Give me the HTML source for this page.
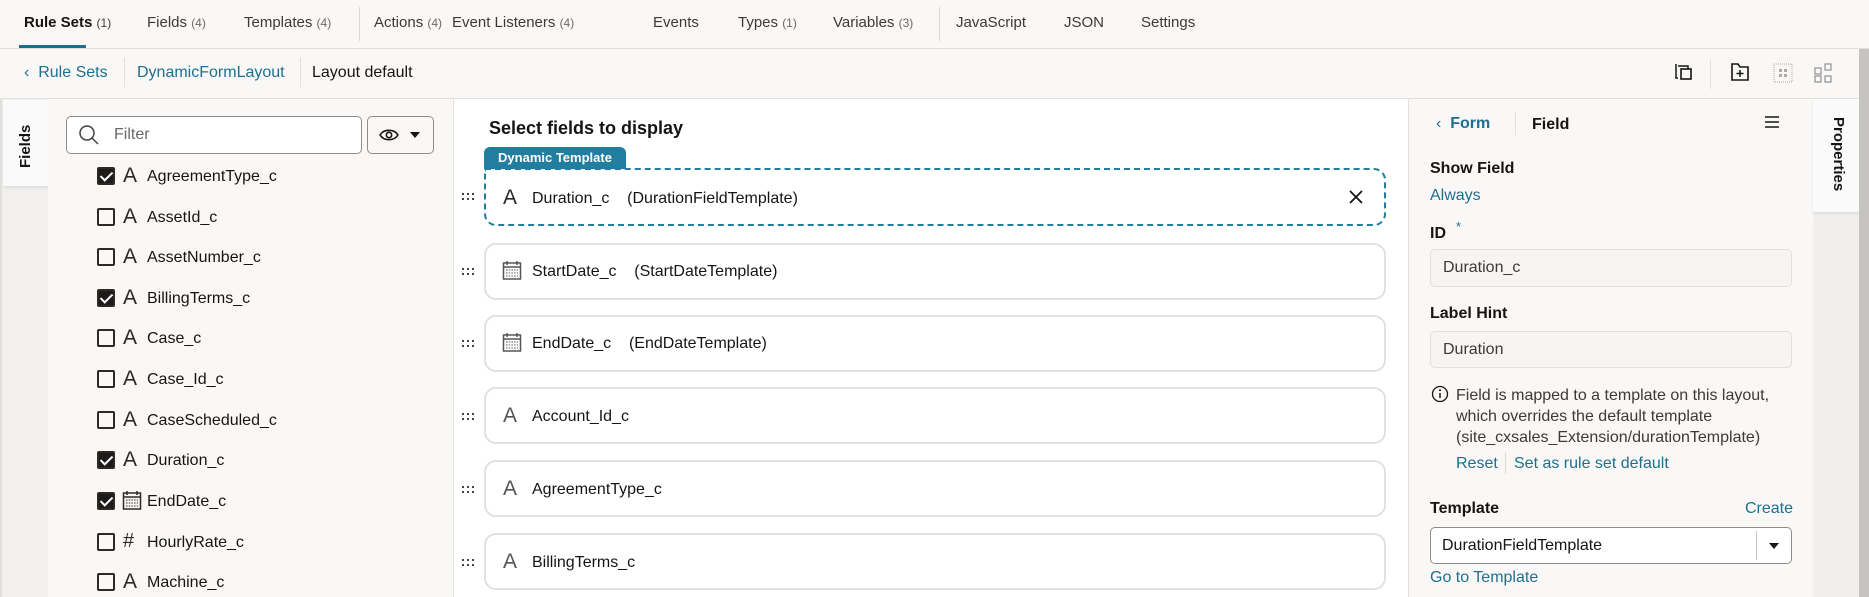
<!DOCTYPE html>
<html><head><meta charset="utf-8"><style>
*{box-sizing:border-box;margin:0;padding:0}
body{width:1869px;height:597px;overflow:hidden;background:#f9f8f7;font-family:"Liberation Sans",sans-serif;color:#161513;font-size:16px;position:relative}
.a{position:absolute;white-space:nowrap}
.tab{top:14px;font-size:15px;color:#3c3a37}
.tab small{font-size:12px;color:#6b6966}
.link{color:#1e6f8f}
.cb{position:absolute;width:18px;height:18px;border:2px solid #2c2a28;border-radius:2px;left:97px}
.cb.on{background:#1d1b19}
.cb.on:after{content:"";position:absolute;left:4px;top:0px;width:5px;height:10px;border:solid #fff;border-width:0 2.5px 2.5px 0;transform:rotate(45deg)}
.ic{position:absolute;font-size:21px;color:#2c2a28;font-weight:300}
.card{position:absolute;left:484px;width:902px;height:57px;border:2px solid #e3e1de;border-radius:12px;background:#fff}
.dh{position:absolute;left:462px}
.inp{position:absolute;left:1430px;width:362px;border:1px solid #e2e0dd;border-radius:5px;background:#f6f5f4;padding-left:12px;font-size:16px;color:#3c3a37}
.lbl{font-weight:bold;font-size:16px;color:#161513}
</style></head><body>
<svg width="0" height="0" style="position:absolute"><defs><g id="dots" fill="#444"><rect x="0" y="0" width="2" height="2"/><rect x="5" y="0" width="2" height="2"/><rect x="10" y="0" width="2" height="2"/><rect x="0" y="5" width="2" height="2"/><rect x="5" y="5" width="2" height="2"/><rect x="10" y="5" width="2" height="2"/></g></defs></svg>
<!-- top tab bar -->
<div class="a" style="left:0;top:0;width:1869px;height:49px;background:#f9f8f7;border-bottom:1px solid #e2e0dd"></div>
<div class="a tab" style="left:24px;color:#161513;font-weight:bold">Rule Sets <small style="font-weight:normal;color:#3c3a37">(1)</small></div>
<div class="a" style="left:19px;top:45px;width:67px;height:3px;background:#1e6f8f"></div>
<div class="a tab" style="left:147px">Fields <small>(4)</small></div>
<div class="a tab" style="left:244px">Templates <small>(4)</small></div>
<div class="a" style="left:359px;top:7px;width:1px;height:34px;background:#dcdad7"></div>
<div class="a tab" style="left:374px">Actions <small>(4)</small></div>
<div class="a tab" style="left:452px">Event Listeners <small>(4)</small></div>
<div class="a tab" style="left:653px">Events</div>
<div class="a tab" style="left:738px">Types <small>(1)</small></div>
<div class="a tab" style="left:833px">Variables <small>(3)</small></div>
<div class="a" style="left:939px;top:7px;width:1px;height:34px;background:#dcdad7"></div>
<div class="a tab" style="left:956px">JavaScript</div>
<div class="a tab" style="left:1064px">JSON</div>
<div class="a tab" style="left:1141px">Settings</div>
<!-- breadcrumb -->
<div class="a" style="left:0;top:49px;width:1859px;height:50px;background:#f9f8f7;border-bottom:1px solid #e2e0dd"></div>
<div class="a link" style="left:24px;top:64px;font-size:16px">&#8249;&nbsp; Rule Sets</div>
<div class="a" style="left:124px;top:58px;width:1px;height:29px;background:#e2e0dd"></div>
<div class="a link" style="left:137px;top:64px">DynamicFormLayout</div>
<div class="a" style="left:300px;top:58px;width:1px;height:29px;background:#e2e0dd"></div>
<div class="a" style="left:312px;top:64px">Layout default</div>
<svg class="a" style="left:1672px;top:62px" width="24" height="22" viewBox="0 0 24 22"><path d="M4 2v14h2M6 4h10v3" fill="none" stroke="#161513" stroke-width="1.5"/><rect x="9" y="7" width="10" height="10" fill="none" stroke="#161513" stroke-width="1.6"/></svg>
<div class="a" style="left:1710px;top:59px;width:1px;height:30px;background:#e2e0dd"></div>
<svg class="a" style="left:1730px;top:62px" width="22" height="22" viewBox="0 0 22 22"><path d="M2 2h6l2 3h8v13H2z" fill="none" stroke="#161513" stroke-width="1.6"/><path d="M10 8v7M6.5 11.5h7" stroke="#161513" stroke-width="1.5"/></svg>
<svg class="a" style="left:1773px;top:63px" width="20" height="20" viewBox="0 0 20 20"><rect x="1" y="1" width="18" height="18" fill="none" stroke="#aaa" stroke-dasharray="1 1"/><rect x="6" y="6" width="3" height="3" fill="#aaa"/><rect x="11" y="6" width="3" height="3" fill="#aaa"/><rect x="6" y="11" width="3" height="3" fill="#aaa"/><rect x="11" y="11" width="3" height="3" fill="#aaa"/></svg>
<svg class="a" style="left:1814px;top:63px" width="20" height="20" viewBox="0 0 20 20" fill="none" stroke="#999" stroke-width="1.3"><rect x="1" y="5" width="6" height="6"/><rect x="11" y="1" width="6" height="6"/><rect x="1" y="13" width="6" height="6"/><rect x="11" y="13" width="6" height="6"/></svg>
<!-- left gutter -->
<div class="a" style="left:0;top:99px;width:48px;height:498px;background:#f1f0ee;border-left:2px solid #e2e0dd"></div>
<div class="a" style="left:3px;top:100px;width:45px;height:86px;background:#fafafa;box-shadow:0 2px 3px rgba(0,0,0,.08)"></div>
<div class="a" style="left:17px;top:168px;transform:rotate(-90deg);transform-origin:0 0;font-weight:bold;font-size:15px;width:50px">Fields</div>
<!-- left list -->
<div class="a" style="left:48px;top:99px;width:406px;height:498px;background:#f9f8f7;border-right:1px solid #e2e0dd"></div>
<div class="a" style="left:66px;top:116px;width:296px;height:38px;border:1px solid #8f8d89;border-radius:5px;background:#fff"></div>
<svg class="a" style="left:78px;top:124px" width="22" height="22" viewBox="0 0 22 22"><circle cx="9" cy="9" r="7" fill="none" stroke="#444" stroke-width="1.5"/><path d="M14 14l6 6" stroke="#444" stroke-width="1.5"/></svg>
<div class="a" style="left:114px;top:126px;color:#6b6966">Filter</div>
<div class="a" style="left:367px;top:116px;width:67px;height:38px;border:1px solid #8f8d89;border-radius:5px;background:#f9f8f7"></div>
<svg class="a" style="left:379px;top:127px" width="20" height="16" viewBox="0 0 22 18"><path d="M1 9C5 2 17 2 21 9C17 16 5 16 1 9z" fill="none" stroke="#161513" stroke-width="1.8"/><circle cx="11" cy="9" r="3" fill="none" stroke="#161513" stroke-width="1.8"/></svg>
<div class="a" style="left:410px;top:132px;border-left:5px solid transparent;border-right:5px solid transparent;border-top:6px solid #161513"></div>

<div class="cb on" style="top:167px"></div><div class="ic a" style="left:123px;top:164px">A</div><div class="a" style="left:147px;top:168px">AgreementType_c</div>
<div class="cb" style="top:208px"></div><div class="ic a" style="left:123px;top:205px">A</div><div class="a" style="left:147px;top:209px">AssetId_c</div>
<div class="cb" style="top:248px"></div><div class="ic a" style="left:123px;top:245px">A</div><div class="a" style="left:147px;top:249px">AssetNumber_c</div>
<div class="cb on" style="top:289px"></div><div class="ic a" style="left:123px;top:286px">A</div><div class="a" style="left:147px;top:290px">BillingTerms_c</div>
<div class="cb" style="top:329px"></div><div class="ic a" style="left:123px;top:326px">A</div><div class="a" style="left:147px;top:330px">Case_c</div>
<div class="cb" style="top:370px"></div><div class="ic a" style="left:123px;top:367px">A</div><div class="a" style="left:147px;top:371px">Case_Id_c</div>
<div class="cb" style="top:411px"></div><div class="ic a" style="left:123px;top:408px">A</div><div class="a" style="left:147px;top:412px">CaseScheduled_c</div>
<div class="cb on" style="top:451px"></div><div class="ic a" style="left:123px;top:448px">A</div><div class="a" style="left:147px;top:452px">Duration_c</div>
<div class="cb on" style="top:492px"></div><svg class="a" style="left:122px;top:490px" width="20" height="21" viewBox="0 0 20 21"><rect x="1.5" y="3" width="17" height="16" fill="none" stroke="#2c2a28" stroke-width="1.5"/><path d="M5 1v4M15 1v4M2 7h16" stroke="#2c2a28" stroke-width="1.5"/><path d="M4 10h12M4 13h12M4 16h12" stroke="#2c2a28" stroke-dasharray="1.5 1.2"/></svg><div class="a" style="left:147px;top:493px">EndDate_c</div>
<div class="cb" style="top:533px"></div><div class="ic a" style="left:123px;top:530px;font-size:20px">#</div><div class="a" style="left:147px;top:534px">HourlyRate_c</div>
<div class="cb" style="top:573px"></div><div class="ic a" style="left:123px;top:570px">A</div><div class="a" style="left:147px;top:574px">Machine_c</div>

<!-- center -->
<div class="a" style="left:454px;top:99px;width:955px;height:498px;background:#fff"></div>
<div class="a" style="left:489px;top:118px;font-size:18px;font-weight:bold;color:#161513">Select fields to display</div>
<div class="a" style="left:484px;top:147px;width:142px;height:22px;background:#227e9e;border-radius:6px 6px 0 0;color:#fff;font-size:13px;font-weight:bold;text-align:center;line-height:22px">Dynamic Template</div>
<div class="a" style="left:484px;top:168px;width:902px;height:58px;border:2px dashed #227e9e;border-radius:0 12px 12px 12px"></div>
<svg class="dh" style="top:193px" width="12" height="7"><use href="#dots"/></svg>
<div class="ic a" style="left:503px;top:186px">A</div><div class="a" style="left:532px;top:190px">Duration_c&nbsp;&nbsp;&nbsp; (DurationFieldTemplate)</div>
<svg class="a" style="left:1349px;top:190px" width="14" height="14" viewBox="0 0 14 14"><path d="M1 1l12 12M13 1L1 13" stroke="#161513" stroke-width="1.8"/></svg>

<div class="card" style="top:243px"></div><svg class="dh" style="top:268px" width="12" height="7"><use href="#dots"/></svg>
<svg class="a" style="left:502px;top:260px" width="20" height="21" viewBox="0 0 20 21"><rect x="1.5" y="3" width="17" height="16" fill="none" stroke="#555" stroke-width="1.5"/><path d="M5 1v4M15 1v4M2 7h16" stroke="#555" stroke-width="1.5"/><path d="M4 10h12M4 13h12M4 16h12" stroke="#555" stroke-dasharray="1.5 1.2"/></svg>
<div class="a" style="left:532px;top:263px">StartDate_c&nbsp;&nbsp;&nbsp; (StartDateTemplate)</div>
<div class="card" style="top:315px"></div><svg class="dh" style="top:340px" width="12" height="7"><use href="#dots"/></svg>
<svg class="a" style="left:502px;top:332px" width="20" height="21" viewBox="0 0 20 21"><rect x="1.5" y="3" width="17" height="16" fill="none" stroke="#555" stroke-width="1.5"/><path d="M5 1v4M15 1v4M2 7h16" stroke="#555" stroke-width="1.5"/><path d="M4 10h12M4 13h12M4 16h12" stroke="#555" stroke-dasharray="1.5 1.2"/></svg>
<div class="a" style="left:532px;top:335px">EndDate_c&nbsp;&nbsp;&nbsp; (EndDateTemplate)</div>
<div class="card" style="top:387px"></div><svg class="dh" style="top:413px" width="12" height="7"><use href="#dots"/></svg>
<div class="ic a" style="left:503px;top:404px;color:#555">A</div><div class="a" style="left:532px;top:408px">Account_Id_c</div>
<div class="card" style="top:460px"></div><svg class="dh" style="top:486px" width="12" height="7"><use href="#dots"/></svg>
<div class="ic a" style="left:503px;top:477px;color:#555">A</div><div class="a" style="left:532px;top:481px">AgreementType_c</div>
<div class="card" style="top:533px"></div><svg class="dh" style="top:559px" width="12" height="7"><use href="#dots"/></svg>
<div class="ic a" style="left:503px;top:550px;color:#555">A</div><div class="a" style="left:532px;top:554px">BillingTerms_c</div>

<!-- right panel -->
<div class="a" style="left:1408px;top:99px;width:406px;height:498px;background:#f9f8f7;border-left:1px solid #e2e0dd"></div>
<div class="a link" style="left:1436px;top:115px;font-size:16px">&#8249;&nbsp;&nbsp;<b style="font-weight:600">Form</b></div>
<div class="a" style="left:1515px;top:111px;width:1px;height:24px;background:#e2e0dd"></div>
<div class="a" style="left:1532px;top:116px;font-weight:600">Field</div>
<svg class="a" style="left:1765px;top:115px" width="14" height="14" viewBox="0 0 14 14"><path d="M0 2h14M0 7h14M0 12h14" stroke="#161513" stroke-width="1.6"/></svg>
<div class="a lbl" style="left:1430px;top:160px">Show Field</div>
<div class="a link" style="left:1430px;top:187px">Always</div>
<div class="a lbl" style="left:1430px;top:225px">ID</div><div class="a link" style="left:1456px;top:219px;font-size:13px">*</div>
<div class="inp" style="top:249px;height:38px;line-height:36px">Duration_c</div>
<div class="a lbl" style="left:1430px;top:305px">Label Hint</div>
<div class="inp" style="top:331px;height:37px;line-height:35px">Duration</div>
<svg class="a" style="left:1431px;top:385px" width="18" height="18" viewBox="0 0 18 18"><circle cx="9" cy="9" r="7.5" fill="none" stroke="#161513" stroke-width="1.3"/><path d="M9 8v5" stroke="#161513" stroke-width="1.5"/><circle cx="9" cy="5.3" r="1" fill="#161513"/></svg>
<div class="a" style="left:1456px;top:385px;line-height:21px;color:#3c3a37">Field is mapped to a template on this layout,<br>which overrides the default template<br>(site_cxsales_Extension/durationTemplate)</div>
<div class="a link" style="left:1456px;top:455px">Reset</div>
<div class="a" style="left:1505px;top:452px;width:1px;height:22px;background:#dcdad7"></div>
<div class="a link" style="left:1514px;top:455px">Set as rule set default</div>
<div class="a lbl" style="left:1430px;top:500px">Template</div>
<div class="a link" style="left:1745px;top:500px">Create</div>
<div class="a" style="left:1430px;top:527px;width:362px;height:37px;border:1px solid #8f8d89;border-radius:5px;background:#fff"></div>
<div class="a" style="left:1442px;top:537px;color:#161513">DurationFieldTemplate</div>
<div class="a" style="left:1756px;top:531px;width:1px;height:29px;background:#c8c6c3"></div>
<div class="a" style="left:1769px;top:543px;border-left:5px solid transparent;border-right:5px solid transparent;border-top:6px solid #161513"></div>
<div class="a link" style="left:1430px;top:569px">Go to Template</div>
<!-- properties tab -->
<div class="a" style="left:1813px;top:99px;width:46px;height:498px;background:#f0efed"></div>
<div class="a" style="left:1813px;top:99px;width:46px;height:113px;background:#fafafa;box-shadow:0 2px 3px rgba(0,0,0,.08)"></div>
<div class="a" style="left:1847px;top:117px;transform:rotate(90deg);transform-origin:0 0;font-weight:bold;font-size:15px">Properties</div>
<div class="a" style="left:1859px;top:49px;width:10px;height:548px;background:#c6c4c0"></div>
</body></html>
